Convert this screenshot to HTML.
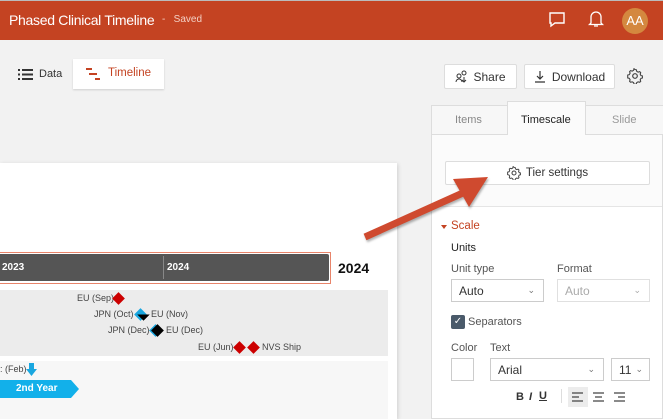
<!DOCTYPE html><html><head><style>
*{box-sizing:border-box;margin:0;padding:0}
body{width:663px;height:419px;overflow:hidden;background:#f2f2f2;font-family:"Liberation Sans",sans-serif;position:relative;color:#333}
.a{position:absolute}
.hdr{left:0;top:0;width:663px;height:40px;background:#c44322;border-top:1px solid #bbb}
.btn{background:#fff;border:1px solid #ddd;border-radius:2px;font-size:12px;display:flex;align-items:center;justify-content:center}
.t{font-size:9px;color:#444;white-space:nowrap}
.dia{width:9px;height:9px;transform:rotate(45deg)}
.sel{background:#fff;border:1px solid #ccc;font-size:12px;padding-left:7px;display:flex;align-items:center}
</style></head><body>
<div class="a hdr"></div>
<div class="a" style="left:9px;top:12px;color:#fff;font-size:14px;letter-spacing:-0.3px">Phased Clinical Timeline</div>
<div class="a" style="left:162px;top:14px;color:#f3d0c4;font-size:10px">-&nbsp;&nbsp; Saved</div>
<svg class="a" style="left:548px;top:11px" width="18" height="17" viewBox="0 0 18 17"><path d="M2 2h14v10H7l-4 3v-3H2z" fill="none" stroke="#fff" stroke-width="1.4"/></svg>
<svg class="a" style="left:588px;top:10px" width="16" height="18" viewBox="0 0 16 18"><path d="M3 13V7a5 5 0 0 1 10 0v6l1.5 1.5h-13z M6 16h4" fill="none" stroke="#fff" stroke-width="1.3"/></svg>
<div class="a" style="left:622px;top:8px;width:26px;height:26px;border-radius:50%;background:#d4883f;color:#fff;font-size:13px;text-align:center;line-height:26px">AA</div>

<svg class="a" style="left:18px;top:69px" width="15" height="11"><g fill="#333"><rect x="0" y="0" width="2" height="2"/><rect x="4" y="0" width="11" height="2"/><rect x="0" y="4.5" width="2" height="2"/><rect x="4" y="4.5" width="11" height="2"/><rect x="0" y="9" width="2" height="2"/><rect x="4" y="9" width="11" height="2"/></g></svg>
<div class="a" style="left:39px;top:68px;font-size:11px">Data</div>
<div class="a" style="left:73px;top:59px;width:91px;height:30px;background:#fff;box-shadow:0 1px 2px rgba(0,0,0,.15)"></div>
<svg class="a" style="left:86px;top:68px" width="14" height="12"><g fill="#c44322"><rect x="0" y="0" width="6" height="2"/><rect x="3" y="5" width="8" height="2"/><rect x="9" y="10" width="5" height="2"/></g></svg>
<div class="a" style="left:108px;top:67px;font-size:11.5px;color:#c44322">Timeline</div>

<div class="a btn" style="left:444px;top:64px;width:73px;height:25px"><svg width="14" height="13" style="margin-right:4px"><g fill="none" stroke="#333" stroke-width="1"><circle cx="4" cy="6" r="2"/><path d="M1 12a3 3 0 0 1 6 0"/><circle cx="9" cy="3" r="2"/><path d="M9 7v5M7 10l2 2 2-2"/></g></svg>Share</div>
<div class="a btn" style="left:524px;top:64px;width:91px;height:25px"><svg width="12" height="13" style="margin-right:6px"><path d="M6 1v8M3 6l3 3 3-3M1 12h10" fill="none" stroke="#333" stroke-width="1.2"/></svg>Download</div>
<svg class="a" style="left:627px;top:68px" width="16" height="16" viewBox="0 0 16 16"><circle cx="8" cy="8" r="2.3" fill="none" stroke="#444" stroke-width="1.2"/><path d="M8 1.5l1.3.2.4 1.6 1.4.8 1.6-.5 1 1-.5 1.6.8 1.4 1.6.4v1.9l-1.6.4-.8 1.4.5 1.6-1 1-1.6-.5-1.4.8-.4 1.6H7l-.4-1.6-1.4-.8-1.6.5-1-1 .5-1.6-.8-1.4-1.6-.4V7l1.6-.4.8-1.4-.5-1.6 1-1 1.6.5 1.4-.8.4-1.6z" fill="none" stroke="#444" stroke-width="1.1"/></svg>

<div class="a" style="left:0;top:163px;width:397px;height:256px;background:#fff;box-shadow:1px 1px 4px rgba(0,0,0,.15)"></div>
<div class="a" style="left:0;top:252px;width:331px;height:32px;border:1px solid #e8846a;border-left:none"></div>
<div class="a" style="left:0;top:254px;width:329px;height:27px;background:#555;border-radius:0 2px 2px 0"></div>
<div class="a" style="left:163px;top:256px;width:1px;height:23px;background:#888"></div>
<div class="a" style="left:2px;top:262px;color:#fff;font-size:10px;font-weight:bold">2023</div>
<div class="a" style="left:167px;top:262px;color:#fff;font-size:10px;font-weight:bold">2024</div>
<div class="a" style="left:338px;top:260px;font-size:14px;font-weight:bold;color:#111">2024</div>
<div class="a" style="left:0;top:290px;width:388px;height:66px;background:#ececec"></div>
<div class="a" style="left:0;top:361px;width:388px;height:58px;background:#f7f7f7"></div>
<div class="a t" style="left:77px;top:293px">EU (Sep)</div><div class="a dia" style="left:114px;top:294px;background:#c00"></div>
<div class="a t" style="left:94px;top:309px">JPN (Oct)</div><div class="a dia" style="left:136px;top:310px;background:#1aa7e0"></div><div class="a dia" style="left:139px;top:310px;background:#000;clip-path:polygon(100% 0,100% 100%,0 100%)"></div><div class="a t" style="left:151px;top:309px">EU (Nov)</div>
<div class="a t" style="left:108px;top:325px">JPN (Dec)</div><div class="a dia" style="left:151px;top:326px;background:#1aa7e0"></div><div class="a dia" style="left:153px;top:326px;background:#000"></div><div class="a t" style="left:166px;top:325px">EU (Dec)</div>
<div class="a t" style="left:198px;top:342px">EU (Jun)</div><div class="a dia" style="left:235px;top:343px;background:#c00"></div><div class="a dia" style="left:249px;top:343px;background:#c00"></div><div class="a t" style="left:262px;top:342px">NVS Ship</div>
<div class="a t" style="left:0;top:364px">: (Feb)</div>
<svg class="a" style="left:26px;top:363px" width="11" height="13"><path d="M3 0h5v6h3l-5.5 7L0 6h3z" fill="#1aa7e0"/></svg>
<svg class="a" style="left:0;top:380px" width="80" height="18"><path d="M0 0h71l8 9-8 9H0z" fill="#12b0ea"/></svg>
<div class="a" style="left:16px;top:383px;color:#fff;font-size:10px;font-weight:bold">2nd Year</div>

<div class="a" style="left:431px;top:105px;width:232px;height:314px;background:#fff;border:1px solid #ddd"></div>
<div class="a" style="left:432px;top:106px;width:231px;height:29px;background:#f7f7f7;border-bottom:1px solid #ddd"></div>
<div class="a" style="left:507px;top:101px;width:79px;height:34px;background:#fbfbfb;border:1px solid #ddd;border-bottom:none"></div>
<div class="a" style="left:455px;top:114px;font-size:11px;color:#888">Items</div>
<div class="a" style="left:521px;top:114px;font-size:11px;color:#222">Timescale</div>
<div class="a" style="left:612px;top:114px;font-size:11px;color:#999">Slide</div>
<div class="a" style="left:432px;top:135px;width:230px;height:72px;background:#fbfbfb;border-bottom:1px solid #e5e5e5"></div>
<div class="a btn" style="left:445px;top:161px;width:205px;height:24px;font-size:11.5px"><svg width="14" height="14" viewBox="0 0 16 16" style="margin-right:5px"><circle cx="8" cy="8" r="2.3" fill="none" stroke="#444" stroke-width="1.2"/><path d="M8 1.5l1.3.2.4 1.6 1.4.8 1.6-.5 1 1-.5 1.6.8 1.4 1.6.4v1.9l-1.6.4-.8 1.4.5 1.6-1 1-1.6-.5-1.4.8-.4 1.6H7l-.4-1.6-1.4-.8-1.6.5-1-1 .5-1.6-.8-1.4-1.6-.4V7l1.6-.4.8-1.4-.5-1.6 1-1 1.6.5 1.4-.8.4-1.6z" fill="none" stroke="#444" stroke-width="1.1"/></svg>Tier settings</div>
<div class="a" style="left:441px;top:225px;width:0;height:0;border-left:3px solid transparent;border-right:3px solid transparent;border-top:4px solid #c44322"></div>
<div class="a" style="left:451px;top:220px;font-size:11.5px;color:#c44322">Scale</div>
<div class="a" style="left:451px;top:242px;font-size:11px;color:#222">Units</div>
<div class="a" style="left:451px;top:263px;font-size:11px;color:#555">Unit type</div>
<div class="a" style="left:557px;top:263px;font-size:11px;color:#555">Format</div>
<div class="a sel" style="left:451px;top:279px;width:93px;height:23px">Auto<span style="margin-left:auto;margin-right:8px;color:#777;font-size:9px">&#8964;</span></div>
<div class="a sel" style="left:557px;top:279px;width:93px;height:23px;color:#aaa;border-color:#e0e0e0">Auto<span style="margin-left:auto;margin-right:8px;font-size:9px">&#8964;</span></div>
<div class="a" style="left:451px;top:315px;width:14px;height:14px;background:#4a5a6a;border-radius:2px;color:#fff;font-size:10px;text-align:center;line-height:14px">&#10003;</div>
<div class="a" style="left:468px;top:316px;font-size:11px;color:#555">Separators</div>
<div class="a" style="left:451px;top:342px;font-size:11px;color:#555">Color</div>
<div class="a" style="left:490px;top:342px;font-size:11px;color:#555">Text</div>
<div class="a" style="left:451px;top:358px;width:23px;height:23px;background:#fff;border:1px solid #ccc"></div>
<div class="a sel" style="left:490px;top:358px;width:114px;height:23px">Arial<span style="margin-left:auto;margin-right:8px;color:#777;font-size:9px">&#8964;</span></div>
<div class="a sel" style="left:611px;top:358px;width:39px;height:23px;padding-left:7px">11<span style="margin-left:4px;color:#777;font-size:9px">&#8964;</span></div>
<div class="a" style="left:516px;top:391px;font-size:11px;font-weight:bold;color:#333">B</div>
<div class="a" style="left:529px;top:391px;font-size:11px;font-style:italic;font-weight:bold;color:#333">I</div>
<div class="a" style="left:539px;top:390px;font-size:11px;font-weight:bold;text-decoration:underline;color:#333">U</div>
<div class="a" style="left:561px;top:389px;width:1px;height:14px;background:#ddd"></div>
<div class="a" style="left:568px;top:387px;width:20px;height:20px;background:#ececec"></div>
<svg class="a" style="left:572px;top:392px" width="60" height="10"><g stroke="#444" stroke-width="1.2"><path d="M0 1h11M0 5h7M0 9h11"/><path d="M21 1h11M23 5h7M21 9h11"/><path d="M42 1h11M46 5h7M42 9h11"/></g></svg>

<svg class="a" style="left:355px;top:165px" width="145" height="85"><g filter="drop-shadow(1px 2px 1px rgba(0,0,0,.3))"><path d="M10 72L110 27" stroke="#cf4a2f" stroke-width="7"/><path d="M133 12L98 14L114 42z" fill="#cf4a2f"/></g></svg>
</body></html>
